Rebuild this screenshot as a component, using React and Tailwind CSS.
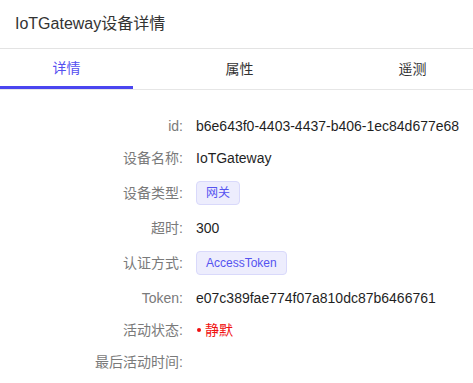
import React from 'react';

const font = { fontFamily: '"Liberation Sans", "Noto Sans CJK SC", sans-serif' };

function Tag({ children }) {
  return (
    <span className="inline-block rounded-[4px] border border-[#d9d9fb] bg-[#ededfd] px-[9px] text-[12px] leading-[22px] text-[#5553f0]">
      {children}
    </span>
  );
}

function Row({ label, tall, children }) {
  return (
    <div className={`flex items-center ${tall ? 'h-[38px]' : 'h-[32px]'}`}>
      <div className="w-[183px] shrink-0 text-right text-[14px] text-[#7a7a7a] whitespace-nowrap">{label}:</div>
      <div className="pl-[13px] text-[14px] text-[#1f1f1f] whitespace-nowrap">{children}</div>
    </div>
  );
}

export default function App() {
  const tabs = ['详情', '属性', '遥测'];
  return (
    <div className="h-[383px] w-[473px] overflow-hidden bg-white" style={font}>
      <div className="flex h-[49px] items-center border-b border-[#e3e3e3] px-[15px] text-[16px] text-[#333]">
        IoTGateway设备详情
      </div>
      <div className="relative h-[41px] border-b border-[#e6e6e6]">
        <div className="flex h-full gap-10">
          {tabs.map((t, i) => (
            <div
              key={t}
              className={`flex h-full w-[133px] shrink-0 items-center justify-center text-[14px] ${
                i === 0 ? 'border-b-[3px] border-[#4a45f0] pt-[2px] text-[#5550f0]' : 'text-[#333]'
              }`}
            >
              {t}
            </div>
          ))}
        </div>
      </div>
      <div className="pt-[20px]">
        <Row label="id">b6e643f0-4403-4437-b406-1ec84d677e68</Row>
        <Row label="设备名称">IoTGateway</Row>
        <Row label="设备类型" tall>
          <Tag>网关</Tag>
        </Row>
        <Row label="超时">300</Row>
        <Row label="认证方式" tall>
          <Tag>AccessToken</Tag>
        </Row>
        <Row label="Token">e07c389fae774f07a810dc87b6466761</Row>
        <Row label="活动状态">
          <span className="flex items-center text-[#f01010]">
            <span className="mr-[4px] ml-[1px] inline-block h-[4px] w-[4px] rounded-full bg-[#f01010]" />
            静默
          </span>
        </Row>
        <Row label="最后活动时间"></Row>
      </div>
    </div>
  );
}
